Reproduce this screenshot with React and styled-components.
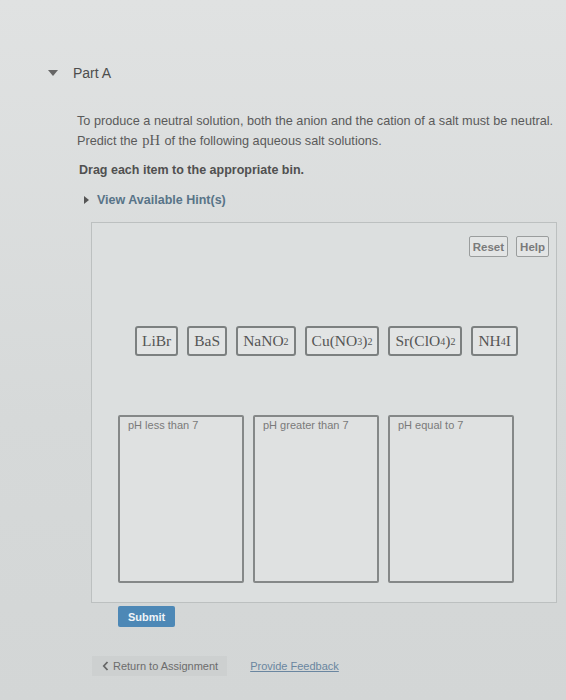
import styled, { createGlobalStyle } from "styled-components";

const GlobalStyle = createGlobalStyle`
  body {
    margin: 0;
    background: #d8dbdb;
    font-family: "Liberation Sans", Arial, sans-serif;
  }
`;

const items = [
  ["LiBr"],
  ["BaS"],
  ["NaNO", ["sub", "2"]],
  ["Cu(NO", ["sub", "3"], ")", ["sub", "2"]],
  ["Sr(ClO", ["sub", "4"], ")", ["sub", "2"]],
  ["NH", ["sub", "4"], "I"],
];

const bins = ["pH less than 7", "pH greater than 7", "pH equal to 7"];

const App = () => {
  return (
    <Page>
      <GlobalStyle />
      <Header>
        <Caret />
        <span>Part A</span>
      </Header>
      <Content>
        <Intro>
          To produce a neutral solution, both the anion and the cation of a salt
          must be neutral. Predict the <Serif>pH</Serif> of the following aqueous
          salt solutions.
        </Intro>
        <Instruction>Drag each item to the appropriate bin.</Instruction>
        <Hint>
          <HintArrow />
          View Available Hint(s)
        </Hint>
        <Panel>
          <Toolbar>
            <ToolButton>Reset</ToolButton>
            <ToolButton>Help</ToolButton>
          </Toolbar>
          <ItemRow>
            {items.map((parts, i) => (
              <Item key={i}>
                {parts.map((p, j) =>
                  Array.isArray(p) ? <sub key={j}>{p[1]}</sub> : p
                )}
              </Item>
            ))}
          </ItemRow>
          <BinRow>
            {bins.map((b) => (
              <Bin key={b}>{b}</Bin>
            ))}
          </BinRow>
        </Panel>
        <SubmitButton>Submit</SubmitButton>
        <Footer>
          <BackButton>
            <svg width="7" height="10" viewBox="0 0 7 10">
              <path d="M5.5 1 L1.8 5 L5.5 9" stroke="#666" strokeWidth="1.8" fill="none" />
            </svg>
            Return to Assignment
          </BackButton>
          <FeedbackLink href="#">Provide Feedback</FeedbackLink>
        </Footer>
      </Content>
    </Page>
  );
};

const Page = styled.div`
  padding: 64px 0 20px 48px;
  min-height: 616px;
  background: linear-gradient(#e0e2e2, #d6d9d9 60%, #d3d6d6);
`;

const Header = styled.div`
  display: flex;
  align-items: center;
  gap: 15px;
  font-size: 14px;
  color: #4d4d4d;
  height: 18px;
`;

const Caret = styled.span`
  width: 0;
  height: 0;
  border-left: 5px solid transparent;
  border-right: 5px solid transparent;
  border-top: 6px solid #666;
`;

const Content = styled.div`
  margin-left: 29px;
  padding-top: 29px;
  width: 490px;
`;

const Intro = styled.p`
  margin: 0;
  font-size: 12.7px;
  line-height: 20px;
  color: #5a5a5a;
`;

const Serif = styled.span`
  display: inline-block;
  font-family: "Liberation Serif", "Times New Roman", serif;
  font-size: 14.5px;
  line-height: 16px;
  margin: 0 1px;
`;

const Instruction = styled.p`
  margin: 9px 0 0 2px;
  font-size: 12.5px;
  font-weight: bold;
  line-height: 20px;
  color: #505050;
`;

const Hint = styled.div`
  display: flex;
  align-items: center;
  gap: 8px;
  margin: 10px 0 0 7px;
  font-size: 12.5px;
  font-weight: bold;
  color: #587488;
  height: 20px;
`;

const HintArrow = styled.span`
  width: 0;
  height: 0;
  border-top: 4px solid transparent;
  border-bottom: 4px solid transparent;
  border-left: 5px solid #555;
`;

const Panel = styled.div`
  margin: 12px 0 0 14px;
  width: 466px;
  height: 381px;
  box-sizing: border-box;
  border: 1px solid #bcc0c0;
  background: #dcdfdf;
  padding: 13px 7px 0 26px;
`;

const Toolbar = styled.div`
  display: flex;
  justify-content: flex-end;
  gap: 8px;
`;

const ToolButton = styled.button`
  font-family: "Liberation Sans", Arial, sans-serif;
  font-size: 11.5px;
  font-weight: bold;
  color: #7a7a7a;
  background: #e3e5e5;
  border: 1px solid #9a9d9d;
  border-radius: 2px;
  padding: 2px 3px;
  height: 21px;
`;

const ItemRow = styled.div`
  display: flex;
  gap: 9px;
  margin: 69px 0 0 17px;
`;

const Item = styled.div`
  display: flex;
  align-items: center;
  height: 30px;
  box-sizing: border-box;
  padding: 0 5px;
  border: 2px solid #7c8080;
  border-radius: 3px;
  background: #e2e4e4;
  font-family: "Liberation Serif", "Times New Roman", serif;
  font-size: 15.5px;
  color: #555;

  & > sub {
    font-size: 10px;
    vertical-align: -4px;
  }
`;

const BinRow = styled.div`
  display: flex;
  gap: 9px;
  margin-top: 59px;
`;

const Bin = styled.div`
  width: 126px;
  height: 168px;
  box-sizing: border-box;
  border: 2px solid #858888;
  border-radius: 2px;
  padding: 2px 8px;
  font-size: 11px;
  color: #7a7a7a;
  background: #dfe1e1;
`;

const SubmitButton = styled.button`
  display: block;
  margin: 3px 0 0 41px;
  height: 21px;
  padding: 0 10px;
  border: none;
  border-radius: 2px;
  background: #4d88b6;
  color: #f0f4f8;
  font-family: "Liberation Sans", Arial, sans-serif;
  font-size: 11px;
  font-weight: bold;
`;

const Footer = styled.div`
  display: flex;
  align-items: center;
  gap: 23px;
  margin: 29px 0 0 15px;
`;

const BackButton = styled.div`
  display: flex;
  align-items: center;
  gap: 4px;
  height: 20px;
  padding: 0 9px 0 10px;
  background: #cdd0d0;
  font-size: 11px;
  color: #6c6c6c;
`;

const FeedbackLink = styled.a`
  font-size: 11px;
  color: #6a86a0;
  text-decoration: underline;
`;

export default App;
